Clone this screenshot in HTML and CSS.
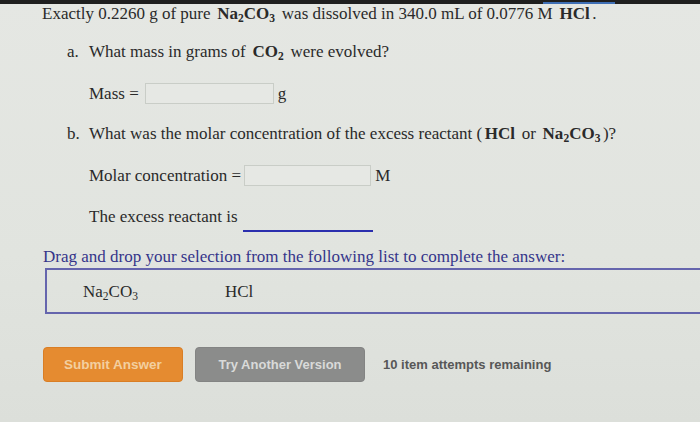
FILE: index.html
```html
<!DOCTYPE html>
<html>
<head>
<meta charset="utf-8">
<link rel="stylesheet" href="styles.css">
</head>
<body>
<div class="topbar"><span class="refs"></span></div>
<div class="content">
  <p class="line first">Exactly 0.2260 g of pure <b class="f">Na<sub>2</sub>CO<sub>3</sub></b> was dissolved in 340.0 mL of 0.0776 M <b class="f">HCl</b>.</p>

  <p class="line q qa"><span class="lbl">a.</span>What mass in grams of <b class="f">CO<sub>2</sub></b> were evolved?</p>

  <div class="row mass">
    <span class="line">Mass =</span>
    <span class="input w-mass"></span>
    <span class="line unit">g</span>
  </div>

  <p class="line q qb"><span class="lbl">b.</span>What was the molar concentration of the excess reactant (<b class="f">HCl</b> or <b class="f">Na<sub>2</sub>CO<sub>3</sub></b>)?</p>

  <div class="row molar">
    <span class="line">Molar concentration =</span>
    <span class="input w-molar"></span>
    <span class="line unit">M</span>
  </div>

  <div class="row excess">
    <span class="line">The excess reactant is</span>
    <span class="blank"></span>
  </div>

  <p class="line drag">Drag and drop your selection from the following list to complete the answer:</p>

  <div class="dropbox">
    <span class="line item item-first">Na<sub>2</sub>CO<sub>3</sub></span>
    <span class="line item">HCl</span>
  </div>

  <div class="actions">
    <span class="btn submit">Submit Answer</span>
    <span class="btn try">Try Another Version</span>
    <span class="attempts">10 item attempts remaining</span>
  </div>
</div>
</body>
</html>
```

FILE: styles.css
```css
html, body {
  margin: 0;
  padding: 0;
}
body {
  width: 700px;
  height: 422px;
  overflow: hidden;
  background: linear-gradient(180deg, #e5e7e3 0%, #e1e4df 60%, #dcdfda 100%);
  font-family: "Liberation Serif", "Times New Roman", serif;
  color: #2a2a2a;
}
.topbar {
  height: 4px;
  background: #1f1f1f;
  display: flex;
  align-items: flex-end;
}
.refs {
  margin-left: 543px;
  width: 72px;
  height: 2px;
  background: #3f6fb5;
}
.content {
  padding-left: 42px;
}
.line {
  font-size: 17px;
  line-height: 20px;
  margin: 0;
  white-space: nowrap;
}
.f {
  font-weight: bold;
  margin: 0 2.5px;
}
sub {
  font-size: 11.5px;
  line-height: 0;
  vertical-align: -3px;
}
.q {
  padding-left: 25px;
}
.lbl {
  display: inline-block;
  width: 22px;
}
.qa {
  margin-top: 18px;
}
.row {
  display: flex;
  align-items: center;
  padding-left: 47px;
}
.mass {
  margin-top: 21px;
}
.input {
  height: 19px;
  border: 1px solid #c9cdc7;
  background: #e6e8e4;
  margin-left: 6px;
}
.w-mass { width: 127px; }
.w-molar { width: 125px; margin-left: 3px; }
.unit {
  margin-left: 4px;
}
.qb {
  margin-top: 20px;
}
.molar {
  margin-top: 21px;
}
.excess {
  margin-top: 21px;
  align-items: flex-start;
}
.blank {
  width: 130px;
  height: 23px;
  border-bottom: 2px solid #2b2fae;
  margin-left: 5px;
}
.drag {
  margin-top: 15px;
  margin-left: 1px;
  color: #35358a;
}
.dropbox {
  margin-top: 1px;
  margin-left: 3px;
  margin-right: -20px;
  border: 2px solid #6565ad;
  padding-left: 36px;
  padding-top: 12px;
  box-sizing: border-box;
  height: 46px;
  display: flex;
  align-items: flex-start;
}
.item-first {
  width: 142px;
}
.actions {
  margin-top: 33px;
  margin-left: 1px;
  display: flex;
  align-items: center;
  font-family: "Liberation Sans", Arial, sans-serif;
  font-weight: bold;
}
.btn {
  height: 35px;
  box-sizing: border-box;
  border-radius: 4px;
  display: flex;
  align-items: center;
  justify-content: center;
  font-size: 13.5px;
}
.submit {
  width: 140px;
  background: #e58b30;
  color: #f3cf9f;
  border: 1px solid #d97e25;
}
.try {
  width: 170px;
  margin-left: 12px;
  background: #8b8c8b;
  color: #d9dad9;
  border: 1px solid #838483;
  font-size: 13px;
}
.attempts {
  margin-left: 18px;
  font-size: 13px;
  color: #575757;
}
```
